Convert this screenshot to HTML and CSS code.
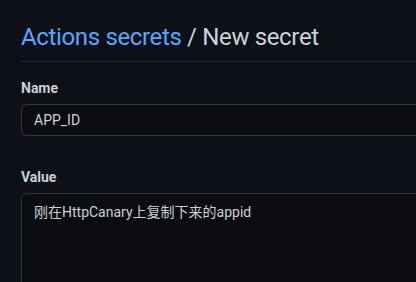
FILE: index.html
```html
<!DOCTYPE html>
<html>
<head>
<meta charset="utf-8">
<link rel="stylesheet" href="styles.css">
</head>
<body>
<div class="page">
  <div class="header">
    <h2 class="title"><a class="crumb">Actions secrets</a> / New secret</h2>
  </div>
  <form class="form">
    <div class="group">
      <label class="label">Name</label>
      <div class="input">APP_ID</div>
    </div>
    <div class="group value-group">
      <label class="label">Value</label>
      <div class="textarea">刚在HttpCanary上复制下来的appid</div>
    </div>
  </form>
</div>
</body>
</html>
```
FILE: styles.css
```css
html, body {
  margin: 0;
  padding: 0;
  background: #0d1117;
  overflow: hidden;
  height: 282px;
}
.page {
  width: 600px;
  padding-left: 21px;
  font-family: Roboto, "Noto Sans CJK SC", sans-serif;
  color: #c9d1d9;
}
.header {
  padding-top: 22px;
  padding-bottom: 9px;
  border-bottom: 1px solid #21262d;
}
.title {
  margin: 0;
  font-size: 24px;
  font-weight: 400;
  line-height: 30px;
  letter-spacing: -0.35px;
  color: #c9d1d9;
}
.crumb {
  color: #58a6ff;
}
.form {
  padding-top: 16px;
}
.group {
  display: flex;
  flex-direction: column;
}
.label {
  font-size: 14px;
  font-weight: 700;
  line-height: 20px;
  margin-bottom: 6px;
  color: #c9d1d9;
}
.input {
  height: 30px;
  border: 1px solid #30363d;
  border-radius: 6px;
  background: #0a0c10;
  font-size: 14px;
  line-height: 30px;
  padding: 0 12px;
}
.value-group {
  margin-top: 31px;
}
.textarea {
  height: 200px;
  border: 1px solid #30363d;
  border-radius: 6px;
  background: #0a0c10;
  font-size: 14px;
  line-height: 20px;
  padding: 8px 12px;
}
```
